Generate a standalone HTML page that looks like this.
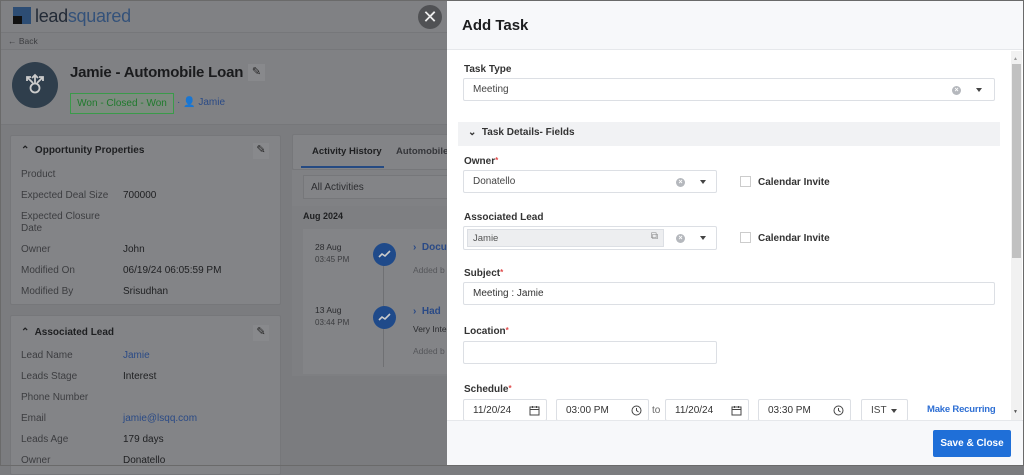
<!DOCTYPE html>
<html><head><meta charset="utf-8"><style>
*{box-sizing:border-box;margin:0;padding:0}
body{width:1024px;height:466px;overflow:hidden;font-family:"Liberation Sans",sans-serif;position:relative;background:#7b7c7f}
.a{position:absolute}
.lbl{color:#3c3d40;font-size:10px}
.val{color:#1e1f21;font-size:10px}
.lnk{color:#2a4a86;font-size:10px}
.card{background:#838487;border:1px solid #76777a;border-radius:2px}
.fl{font-size:10px;color:#333;font-weight:bold}
.req{color:#e04b4b;font-size:8px;vertical-align:top}
.inp{position:absolute;border:1px solid #dcdfe4;border-radius:2px;background:#fff;font-size:10px;color:#444;padding-left:9px;display:flex;align-items:center}
.clr{position:absolute;width:9px;height:9px;border-radius:50%;background:#b5b8bd;color:#fff;font-size:7px;line-height:9px;text-align:center;font-weight:bold}
.car{position:absolute;width:0;height:0;border-left:3.5px solid transparent;border-right:3.5px solid transparent;border-top:4px solid #444}
.cb{position:absolute;width:11px;height:11px;border:1px solid #ccc;background:#fff}
.cbl{position:absolute;font-size:10px;font-weight:bold;color:#333}
.ic{position:absolute;right:6px;top:5px}
</style></head><body>
<!-- left page -->
<div class="a" style="left:0;top:0;width:447px;height:33px;background:#808184;border-bottom:1px solid #76777a"></div>
<div class="a" style="left:13px;top:7px;width:18px;height:17px;background:#2d4d74"></div>
<div class="a" style="left:13px;top:16px;width:9px;height:8px;background:#111"></div>
<div class="a" style="left:35px;top:6px;font-size:18px;color:#222a36;letter-spacing:-0.3px">lead<span style="color:#34527a">squared</span></div>
<div class="a" style="left:418px;top:5px;width:24px;height:24px;border-radius:50%;background:#505154;color:#eee;font-size:18px;line-height:24px;text-align:center">✕</div>
<div class="a" style="left:0;top:33px;width:447px;height:17px;background:#7e7f82;border-bottom:1px solid #76777a"></div>
<div class="a" style="left:8px;top:36px;font-size:8.5px;color:#3c3d40">← Back</div>
<div class="a" style="left:0;top:50px;width:447px;height:75px;background:#808184;border-bottom:1px solid #76777a"></div>
<div class="a" style="left:12px;top:62px;width:46px;height:46px;border-radius:50%;background:#2f3e4c"></div>
<svg class="a" style="left:24px;top:72px" width="22" height="24" viewBox="0 0 22 24" fill="none" stroke="#ccc" stroke-width="1.8"><circle cx="11" cy="16" r="4.5"/><path d="M11 11.5V3M8 6l3-3 3 3M9 11L3 5M3 9V5h4M13 11l6-6M15 5h4v4"/></svg>
<div class="a" style="left:70px;top:64px;font-size:15px;font-weight:bold;color:#1a1b1d;letter-spacing:-0.2px">Jamie - Automobile Loan</div>
<div class="a" style="left:248px;top:64px;width:17px;height:17px;background:#88898c;font-size:11px;text-align:center;line-height:17px;color:#222">✎</div>
<div class="a" style="left:70px;top:93px;width:104px;height:21px;border:1px solid #3a9a4a;background:#7e8c80;color:#1f7a2c;font-size:10px;text-align:center;line-height:19px">Won - Closed - Won</div>
<div class="a" style="left:177px;top:97px;font-size:10px;color:#2a4a86">· 👤 Jamie</div>
<div class="card a" style="left:10px;top:135px;width:271px;height:170px"></div>
<div class="a" style="left:21px;top:145px;font-size:10px;font-weight:bold;color:#1e1f21">⌃&nbsp; Opportunity Properties</div>
<div class="a" style="left:253px;top:143px;width:16px;height:16px;background:#88898c;font-size:11px;text-align:center;color:#222">✎</div>
<div class="a lbl" style="left:21px;top:169px">Product</div>
<div class="a lbl" style="left:21px;top:190px">Expected Deal Size</div><div class="a val" style="left:123px;top:190px">700000</div>
<div class="a lbl" style="left:21px;top:211px;line-height:12px">Expected Closure<br>Date</div>
<div class="a lbl" style="left:21px;top:244px">Owner</div><div class="a val" style="left:123px;top:244px">John</div>
<div class="a lbl" style="left:21px;top:265px">Modified On</div><div class="a val" style="left:123px;top:265px">06/19/24 06:05:59 PM</div>
<div class="a lbl" style="left:21px;top:286px">Modified By</div><div class="a val" style="left:123px;top:286px">Srisudhan</div>
<div class="card a" style="left:10px;top:315px;width:271px;height:160px"></div>
<div class="a" style="left:21px;top:327px;font-size:10px;font-weight:bold;color:#1e1f21">⌃&nbsp; Associated Lead</div>
<div class="a" style="left:253px;top:325px;width:16px;height:16px;background:#88898c;font-size:11px;text-align:center;color:#222">✎</div>
<div class="a lbl" style="left:21px;top:350px">Lead Name</div><div class="a lnk" style="left:123px;top:350px">Jamie</div>
<div class="a lbl" style="left:21px;top:371px">Leads Stage</div><div class="a val" style="left:123px;top:371px">Interest</div>
<div class="a lbl" style="left:21px;top:392px">Phone Number</div>
<div class="a lbl" style="left:21px;top:413px">Email</div><div class="a lnk" style="left:123px;top:413px">jamie@lsqq.com</div>
<div class="a lbl" style="left:21px;top:434px">Leads Age</div><div class="a val" style="left:123px;top:434px">179 days</div>
<div class="a lbl" style="left:21px;top:455px">Owner</div><div class="a val" style="left:123px;top:455px">Donatello</div>
<div class="card a" style="left:292px;top:134px;width:160px;height:36px;background:#838487"></div>
<div class="a" style="left:312px;top:146px;font-size:9.5px;font-weight:bold;color:#1e1f21">Activity History</div>
<div class="a" style="left:396px;top:146px;font-size:9.5px;font-weight:bold;color:#35363a">Automobile L</div>
<div class="a" style="left:301px;top:166px;width:83px;height:2px;background:#254a82"></div>
<div class="a" style="left:292px;top:170px;width:160px;height:36px;background:#808184"></div>
<div class="a" style="left:303px;top:175px;width:150px;height:24px;border:1px solid #76777a;background:#838487;font-size:10px;color:#2c2d30;padding:6px 7px">All Activities</div>
<div class="a" style="left:292px;top:206px;width:160px;height:170px;background:#7e7f82"></div>
<div class="a" style="left:303px;top:211px;font-size:9px;font-weight:bold;color:#1e1f21">Aug 2024</div>
<div class="a" style="left:303px;top:229px;width:150px;height:145px;background:#838487"></div>
<div class="a" style="left:383px;top:255px;width:1px;height:112px;background:#6f7073"></div>
<div class="a" style="left:315px;top:241px;font-size:8.5px;color:#2a2b2e;line-height:12px">28 Aug<br><span style="color:#3c3d40;font-size:8px">03:45 PM</span></div>
<div class="a" style="left:373px;top:243px;width:23px;height:23px;border-radius:50%;background:#1f4a8a"></div>
<svg class="a" style="left:378px;top:249px" width="13" height="11" viewBox="0 0 13 11" fill="none" stroke="#ccc" stroke-width="1.6"><path d="M1 8l3-3 3 2 5-5"/></svg>
<div class="a" style="left:413px;top:242px;font-size:10px;font-weight:bold;color:#2a4a86">›&nbsp; Docu</div>
<div class="a" style="left:413px;top:265px;font-size:8.5px;color:#55565a">Added b</div>
<div class="a" style="left:315px;top:304px;font-size:8.5px;color:#2a2b2e;line-height:12px">13 Aug<br><span style="color:#3c3d40;font-size:8px">03:44 PM</span></div>
<div class="a" style="left:373px;top:306px;width:23px;height:23px;border-radius:50%;background:#1f4a8a"></div>
<svg class="a" style="left:378px;top:312px" width="13" height="11" viewBox="0 0 13 11" fill="none" stroke="#ccc" stroke-width="1.6"><path d="M1 8l3-3 3 2 5-5"/></svg>
<div class="a" style="left:413px;top:306px;font-size:10px;font-weight:bold;color:#2a4a86">›&nbsp; Had</div>
<div class="a" style="left:413px;top:324px;font-size:8.5px;color:#2a2b2e">Very Inte</div>
<div class="a" style="left:413px;top:346px;font-size:8.5px;color:#55565a">Added b</div>

<!-- drawer -->
<div class="a" style="left:447px;top:0;width:577px;height:466px;background:#fff"></div>
<div class="a" style="left:447px;top:0;width:577px;height:50px;background:#f7f8fa;border-bottom:1px solid #e6e8eb"></div>
<div class="a" style="left:462px;top:17px;font-size:15px;font-weight:bold;color:#1d1e20">Add Task</div>
<div class="a" style="left:1011px;top:51px;width:11px;height:369px;background:#f1f1f1"></div>
<div class="a" style="left:1012px;top:64px;width:9px;height:194px;background:#c1c1c1"></div>
<div class="a" style="left:1013px;top:56px;font-size:5px;color:#999">▲</div>
<div class="a" style="left:1013px;top:409px;font-size:5px;color:#555">▼</div>

<div class="a fl" style="left:464px;top:64px">Task Type</div>
<div class="inp" style="left:463px;top:78px;width:532px;height:23px">Meeting</div>
<div class="clr" style="left:952px;top:86px">×</div><div class="car" style="left:976px;top:88px"></div>
<div class="a" style="left:458px;top:122px;width:542px;height:24px;background:#f1f2f4"></div>
<div class="a" style="left:468px;top:127px;font-size:10px;font-weight:bold;color:#333">⌄&nbsp; Task Details- Fields</div>

<div class="a fl" style="left:464px;top:156px">Owner<span class="req">*</span></div>
<div class="inp" style="left:463px;top:170px;width:254px;height:23px">Donatello</div>
<div class="clr" style="left:676px;top:178px">×</div><div class="car" style="left:700px;top:180px"></div>
<div class="cb" style="left:740px;top:176px"></div><div class="cbl" style="left:758px;top:177px">Calendar Invite</div>

<div class="a fl" style="left:464px;top:212px">Associated Lead</div>
<div class="inp" style="left:463px;top:226px;width:254px;height:24px;padding-left:3px"><div style="width:197px;height:18px;background:#edeef0;border:1px solid #dcdfe4;padding:3px 5px;font-size:9.5px;color:#555;position:relative">Jamie<span style="position:absolute;right:5px;top:1px;font-size:10px;color:#888">⧉</span></div></div>
<div class="clr" style="left:676px;top:234px">×</div><div class="car" style="left:700px;top:236px"></div>
<div class="cb" style="left:740px;top:232px"></div><div class="cbl" style="left:758px;top:233px">Calendar Invite</div>

<div class="a fl" style="left:464px;top:268px">Subject<span class="req">*</span></div>
<div class="inp" style="left:463px;top:282px;width:532px;height:23px;color:#333">Meeting : Jamie</div>

<div class="a fl" style="left:464px;top:326px">Location<span class="req">*</span></div>
<div class="inp" style="left:463px;top:341px;width:254px;height:23px"></div>

<div class="a fl" style="left:464px;top:384px">Schedule<span class="req">*</span></div>
<div class="inp" style="left:463px;top:399px;width:84px;height:22px;color:#333">11/20/24<svg class="ic" width="11" height="11" viewBox="0 0 11 11" fill="none" stroke="#444" stroke-width="1"><rect x="1" y="2" width="9" height="8"/><path d="M1 4.5h9M3.5 1v2M7.5 1v2"/></svg></div>
<div class="inp" style="left:556px;top:399px;width:93px;height:22px;color:#333">03:00 PM<svg class="ic" width="11" height="11" viewBox="0 0 11 11" fill="none" stroke="#444" stroke-width="1"><circle cx="5.5" cy="5.5" r="4.5"/><path d="M5.5 3v2.5l2 1.5"/></svg></div>
<div class="a" style="left:652px;top:405px;font-size:10px;color:#666">to</div>
<div class="inp" style="left:665px;top:399px;width:84px;height:22px;color:#333">11/20/24<svg class="ic" width="11" height="11" viewBox="0 0 11 11" fill="none" stroke="#444" stroke-width="1"><rect x="1" y="2" width="9" height="8"/><path d="M1 4.5h9M3.5 1v2M7.5 1v2"/></svg></div>
<div class="inp" style="left:758px;top:399px;width:93px;height:22px;color:#333">03:30 PM<svg class="ic" width="11" height="11" viewBox="0 0 11 11" fill="none" stroke="#444" stroke-width="1"><circle cx="5.5" cy="5.5" r="4.5"/><path d="M5.5 3v2.5l2 1.5"/></svg></div>
<div class="inp" style="left:861px;top:399px;width:47px;height:22px;color:#444">IST</div><div class="car" style="left:891px;top:409px"></div>
<div class="a" style="left:927px;top:404px;font-size:9.5px;font-weight:bold;color:#2e6fd4;letter-spacing:-0.2px">Make Recurring</div>

<div class="a" style="left:447px;top:420px;width:577px;height:46px;background:#f7f8fa;border-top:1px solid #e6e8eb"></div>
<div class="a" style="left:933px;top:430px;width:78px;height:27px;background:#1f6fd8;border-radius:2px;color:#fff;font-size:10px;font-weight:bold;text-align:center;line-height:27px">Save &amp; Close</div>
<div class="a" style="left:0;top:0;width:1024px;height:466px;border:1px solid #6a6a6a;pointer-events:none"></div>
</body></html>
